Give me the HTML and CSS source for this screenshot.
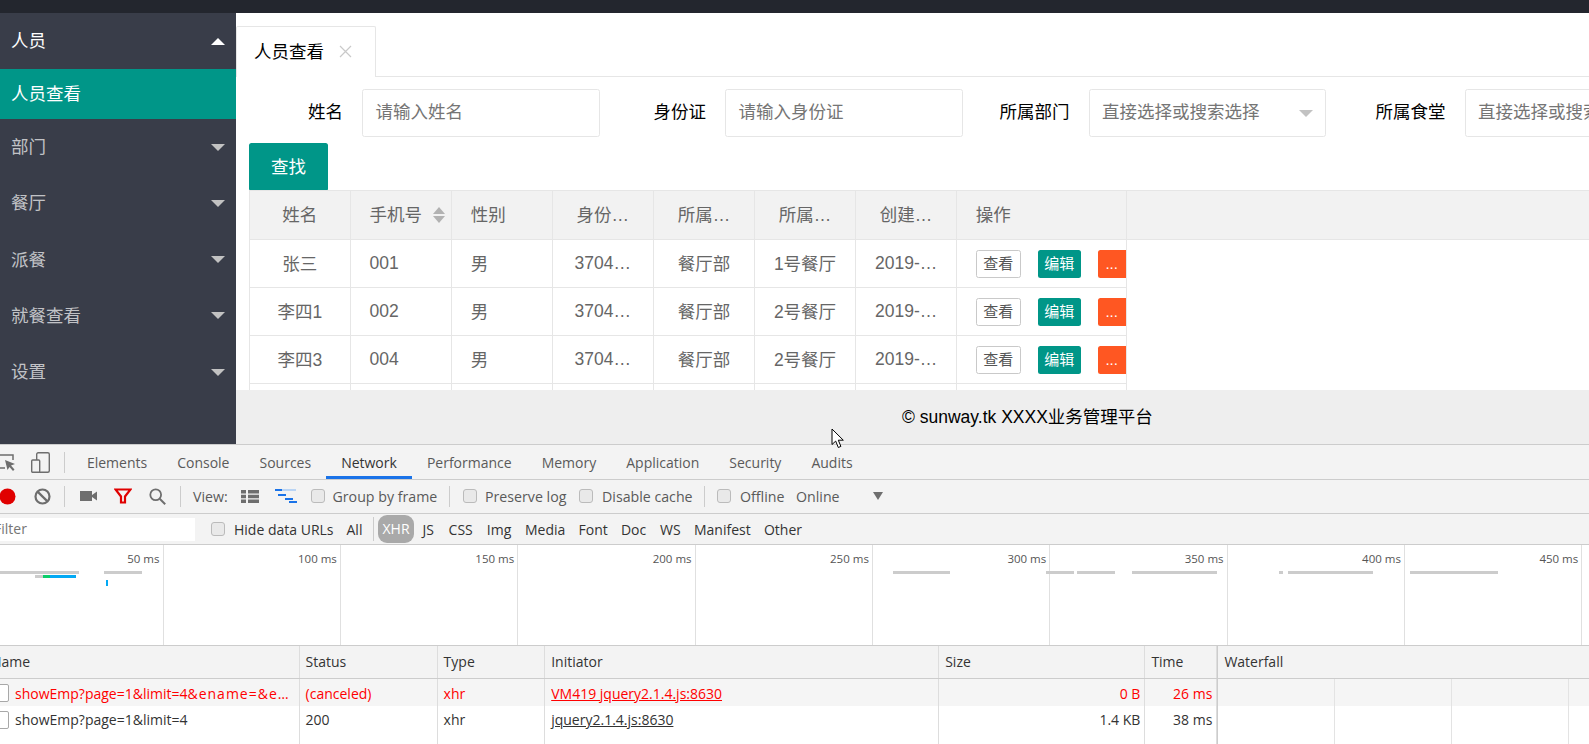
FILE: index.html
```html
<!DOCTYPE html>
<html lang="zh">
<head>
<meta charset="utf-8">
<title>XXXX业务管理平台</title>
<link rel="stylesheet" href="styles.css">
</head>
<body>
<div class="topbar"></div>
<div class="app">
  <aside class="side">
    <div class="nav-item open">人员<i class="tri up"></i></div>
    <div class="nav-sub">人员查看</div>
    <div class="nav-item">部门<i class="tri"></i></div>
    <div class="nav-item">餐厅<i class="tri"></i></div>
    <div class="nav-item">派餐<i class="tri"></i></div>
    <div class="nav-item">就餐查看<i class="tri"></i></div>
    <div class="nav-item">设置<i class="tri"></i></div>
  </aside>
  <div class="main">
    <section class="content">
      <div class="tabbar"><div class="tab">人员查看<svg class="tab-x" width="13" height="13" viewBox="0 0 13 13"><path d="M1 1l11 11M12 1L1 12" stroke="#c9c9c9" stroke-width="1.2" fill="none"/></svg></div></div>
      <form class="form">
        <div class="fitem"><label>姓名</label><div class="fin">请输入姓名</div></div>
        <div class="fitem"><label>身份证</label><div class="fin">请输入身份证</div></div>
        <div class="fitem"><label>所属部门</label><div class="fin">直接选择或搜索选择<i class="sel-tri"></i></div></div>
        <div class="fitem"><label>所属食堂</label><div class="fin">直接选择或搜索选择<i class="sel-tri"></i></div></div>
      </form>
      <button class="find" type="button">查找</button>
      <div class="thead">
        <div class="trow">
          <div class="c ctr">姓名</div>
          <div class="c">手机号<span class="sort"><i class="s-up"></i><i class="s-dn"></i></span></div>
          <div class="c">性别</div>
          <div class="c ctr">身份…</div>
          <div class="c ctr">所属…</div>
          <div class="c ctr">所属…</div>
          <div class="c ctr">创建…</div>
          <div class="c c-op">操作</div>
        </div>
      </div>
      <div class="tbody">
        <div class="trow">
          <div class="c ctr cj">张三</div><div class="c">001</div><div class="c cj">男</div><div class="c ctr">3704…</div><div class="c ctr cj">餐厅部</div><div class="c ctr cj">1号餐厅</div><div class="c ctr">2019-…</div>
          <div class="c c-op"><span class="b b-v">查看</span><span class="b b-e">编辑</span><span class="b b-d">...</span></div>
        </div>
        <div class="trow">
          <div class="c ctr cj">李四1</div><div class="c">002</div><div class="c cj">男</div><div class="c ctr">3704…</div><div class="c ctr cj">餐厅部</div><div class="c ctr cj">2号餐厅</div><div class="c ctr">2019-…</div>
          <div class="c c-op"><span class="b b-v">查看</span><span class="b b-e">编辑</span><span class="b b-d">...</span></div>
        </div>
        <div class="trow">
          <div class="c ctr cj">李四3</div><div class="c">004</div><div class="c cj">男</div><div class="c ctr">3704…</div><div class="c ctr cj">餐厅部</div><div class="c ctr cj">2号餐厅</div><div class="c ctr">2019-…</div>
          <div class="c c-op"><span class="b b-v">查看</span><span class="b b-e">编辑</span><span class="b b-d">...</span></div>
        </div>
        <div class="trow">
          <div class="c"></div><div class="c"></div><div class="c"></div><div class="c"></div><div class="c"></div><div class="c"></div><div class="c"></div><div class="c c-op"></div>
        </div>
      </div>
    </section>
    <footer class="foot">© sunway.tk XXXX业务管理平台</footer>
  </div>
</div>

<div class="dev">
  <div class="dev-tabs">
    <svg class="ic-inspect" width="16" height="18" viewBox="0 0 16 18"><path d="M0 2h13v5M0 15h5" fill="none" stroke="#6e6e6e" stroke-width="1.5"/><path d="M5 7l10 4-4 1.5 3.5 4-1.5 1.5-3.5-4-2 3z" fill="#6e6e6e"/></svg>
    <svg class="ic-device" width="19" height="21" viewBox="0 0 19 21"><rect x="5.7" y=".7" width="12.6" height="19.6" rx="1.5" fill="none" stroke="#6e6e6e" stroke-width="1.4"/><rect x=".7" y="8" width="8" height="12.3" rx="1" fill="#f3f3f3" stroke="#6e6e6e" stroke-width="1.4"/></svg>
    <i class="vsep tabsep"></i>
    <div class="dtab">Elements</div>
    <div class="dtab">Console</div>
    <div class="dtab">Sources</div>
    <div class="dtab on">Network</div>
    <div class="dtab">Performance</div>
    <div class="dtab">Memory</div>
    <div class="dtab">Application</div>
    <div class="dtab">Security</div>
    <div class="dtab">Audits</div>
  </div>
  <div class="tools">
    <svg width="17" height="17" viewBox="0 0 17 17"><circle cx="8.5" cy="8.5" r="8" fill="#e00000"/></svg>
    <svg width="17" height="17" viewBox="0 0 17 17"><circle cx="8.5" cy="8.5" r="7" fill="none" stroke="#6e6e6e" stroke-width="2.2"/><path d="M3.6 3.6l9.8 9.8" stroke="#6e6e6e" stroke-width="2.2"/></svg>
    <i class="vsep"></i>
    <svg width="17" height="12" viewBox="0 0 17 12"><path d="M0 1h12v10H0zM12 5l5-3.5v9L12 7z" fill="#6e6e6e"/></svg>
    <svg width="18" height="16" viewBox="0 0 18 16"><path d="M1.5 1.5h15L11 8.5v6H7v-6z" fill="none" stroke="#e00000" stroke-width="2.2"/></svg>
    <svg width="17" height="17" viewBox="0 0 17 17"><circle cx="6.7" cy="6.7" r="5.4" fill="none" stroke="#6e6e6e" stroke-width="1.8"/><path d="M10.7 10.7l5.5 5.5" stroke="#6e6e6e" stroke-width="2"/></svg>
    <i class="vsep"></i>
    <span>View:</span>
    <svg width="18" height="13" viewBox="0 0 18 13"><path d="M0 0h5v3.5H0zM7 0h11v3.5H7zM0 4.7h5v3.5H0zM7 4.7h11v3.5H7zM0 9.4h5V13H0zM7 9.4h11V13H7z" fill="#6e6e6e"/></svg>
    <svg width="22" height="14" viewBox="0 0 22 14"><path d="M0 0h21v2H0z" fill="#b9d4f4"/><path d="M0 0h7v2H0zM3 5h8v2H3zM10 9h8v2h-8zM14 12h8v2h-8z" fill="#1a73e8"/></svg>
    <i class="cb"></i><span>Group by frame</span>
    <i class="vsep"></i>
    <i class="cb"></i><span>Preserve log</span>
    <i class="cb"></i><span>Disable cache</span>
    <i class="vsep"></i>
    <i class="cb"></i><span>Offline</span><span>Online</span>
    <i class="dd"></i>
  </div>
  <div class="filters">
    <div class="fbox"><span class="fbox-t">Filter</span></div>
    <i class="cb"></i><span>Hide data URLs</span><span>All</span><i class="vsep short"></i>
    <span class="pill">XHR</span><span>JS</span><span>CSS</span><span>Img</span><span>Media</span><span>Font</span><span>Doc</span><span>WS</span><span>Manifest</span><span>Other</span>
  </div>
  <div class="overview">
    <div class="tick t0">50 ms</div>
    <div class="tick">100 ms</div>
    <div class="tick">150 ms</div>
    <div class="tick">200 ms</div>
    <div class="tick">250 ms</div>
    <div class="tick">300 ms</div>
    <div class="tick">350 ms</div>
    <div class="tick">400 ms</div>
    <div class="tick">450 ms</div>
    <i class="bar g" style="left:0;width:79px"></i>
    <i class="bar g" style="left:104px;width:38px"></i>
    <i class="bar g" style="left:893px;width:57px"></i>
    <i class="bar g" style="left:1046px;width:28px"></i>
    <i class="bar g" style="left:1077px;width:38px"></i>
    <i class="bar g" style="left:1132px;width:85px"></i>
    <i class="bar g" style="left:1279px;width:4px"></i>
    <i class="bar g" style="left:1288px;width:85px"></i>
    <i class="bar g" style="left:1410px;width:88px"></i>
    <i class="bar r2 g2" style="left:35px;width:8px"></i>
    <i class="bar r2 gr" style="left:43px;width:7px"></i>
    <i class="bar r2 bl" style="left:50px;width:26px"></i>
    <i class="bar r3 bl" style="left:106px;width:1.5px"></i>
  </div>
  <div class="nhead ngrid">
    <div class="nc"><span class="n-clip">Name</span></div><div class="nc">Status</div><div class="nc">Type</div><div class="nc">Initiator</div><div class="nc">Size</div><div class="nc">Time</div><div class="nc nc-wf wf-top">Waterfall</div>
  </div>
  <div class="nrow ngrid err">
    <div class="nc"><i class="doc"></i>showEmp?page=1&amp;limit=4<span class="wide">&amp;ename=&amp;e…</span></div><div class="nc">(canceled)</div><div class="nc">xhr</div><div class="nc"><u>VM419 jquery2.1.4.js:8630</u></div><div class="nc rt">0 B</div><div class="nc rt">26 ms</div><div class="nc nc-wf"></div>
  </div>
  <div class="nrow ngrid">
    <div class="nc"><i class="doc"></i>showEmp?page=1&amp;limit=4</div><div class="nc">200</div><div class="nc">xhr</div><div class="nc"><u>jquery2.1.4.js:8630</u></div><div class="nc rt">1.4 KB</div><div class="nc rt">38 ms</div><div class="nc nc-wf"></div>
  </div>
  <div class="nrow ngrid">
    <div class="nc"></div><div class="nc"></div><div class="nc"></div><div class="nc"></div><div class="nc"></div><div class="nc"></div><div class="nc nc-wf"></div>
  </div>
</div>

<svg class="cursor" width="14" height="21" viewBox="0 0 14 21"><path d="M1 1v15.5l3.7-3.4 2.6 6.4 2.6-1.1-2.6-6.2h5z" fill="#fff" stroke="#000" stroke-width="1"/></svg>
</body>
</html>
```
FILE: styles.css
```css
* { box-sizing: border-box; }
html, body { margin: 0; padding: 0; }
body {
  width: 1589px;
  height: 744px;
  overflow: hidden;
  position: relative;
  background: #fff;
  font: 17.5px "Liberation Sans", "Noto Sans CJK SC", sans-serif;
  color: #333;
}
i { display: block; font-style: normal; }

.topbar { height: 13px; background: #23262e; }
.app { display: flex; height: 431px; }

.side { width: 236px; flex: none; background: #393d49; color: rgba(255,255,255,.7); }
.nav-item {
  height: 56.25px;
  padding: 0 11.5px 3px 11px;
  display: flex;
  align-items: center;
  justify-content: space-between;
}
.nav-item.open { height: 56px; color: #fff; }
.nav-sub {
  height: 50px;
  padding: 0 0 3px 11px;
  display: flex;
  align-items: center;
  background: #009688;
  color: #fff;
}
.tri { width: 0; height: 0; margin-top: 3px; border: 7.8px solid transparent; border-top-color: #c2c2c2; border-bottom-width: 0; }
.tri.up { border-top-width: 0; border-bottom-width: 7.8px; border-top-color: transparent; border-bottom-color: #fff; }

.main { flex: 1; min-width: 0; display: flex; flex-direction: column; }
.content { height: 377px; overflow: hidden; background: #fff; }
.foot {
  height: 54px;
  background: #eee;
  color: #000;
  display: flex;
  align-items: center;
  padding: 0 0 3px 666px;
}

.tabbar { padding-top: 13px; height: 63.5px; border-bottom: 1px solid #e6e6e6; }
.tab {
  width: 140px;
  height: 50.5px;
  padding: 0 0 3px 17px;
  display: flex;
  align-items: center;
  background: #fff;
  color: #000;
  border: 1px solid #e6e6e6;
  border-bottom: 0;
  border-radius: 2px 2px 0 0;
}
.tab-x { margin: 3px 0 0 15px; flex: none; }

.form { display: flex; margin-top: 12.8px; }
.fitem { flex: none; width: 363px; display: flex; }
.fitem:first-child { margin-left: .5px; }
.fitem:nth-child(2) { width: 364px; }
.fitem:nth-child(3) { width: 376px; }
.fitem label { width: 125.5px; flex: none; text-align: right; padding-right: 19px; line-height: 47.5px; color: #000; }
.fitem:nth-child(n+3) label { width: 125px; }
.fin {
  width: 237.5px;
  flex: none;
  height: 47.5px;
  padding-left: 12.5px;
  border: 1px solid #e6e6e6;
  border-radius: 2.5px;
  color: #757575;
  line-height: 45px;
  position: relative;
  white-space: nowrap;
  overflow: hidden;
}
.sel-tri {
  position: absolute;
  right: 12px;
  top: 20px;
  width: 0;
  height: 0;
  border: 7.5px solid transparent;
  border-top-color: #c2c2c2;
  border-bottom-width: 0;
}

.find {
  display: block;
  margin: 6px 0 0 13px;
  width: 79px;
  height: 48px;
  border: 0;
  border-radius: 2.5px;
  background: #009688;
  color: #fff;
  font: inherit;
  padding: 0 0 3px;
}

.thead { background: #f2f2f2; border-top: 1px solid #e6e6e6; border-bottom: 1px solid #e6e6e6; margin-left: 13px; height: 49.5px; margin-top: -.7px; }
.tbody { margin-left: 13px; margin-top: .5px; width: 878px; color: #666; }
.trow { display: flex; height: 48px; color: #666; }
.thead .trow { height: 47.5px; }
.thead .c { padding-bottom: 3px; }
.tbody .trow { border-bottom: 1px solid #e6e6e6; }
.c {
  flex: none;
  width: 101.1px;
  border-right: 1px solid #e6e6e6;
  display: flex;
  align-items: center;
  padding-left: 19px;
  white-space: nowrap;
}
.c:first-child { border-left: 1px solid #e6e6e6; width: 101.6px; }
.c.ctr { justify-content: center; padding-left: 0; }
.c.cj { padding-bottom: 3px; }
.c-op { width: 170px; padding-left: 18.5px; overflow: hidden; }

.sort { margin-left: 11px; width: 13px; display: flex; flex-direction: column; gap: 2.5px; margin-top: 3px; }
.s-up { width: 0; height: 0; border: 6.5px solid transparent; border-top: 0; border-bottom: 7px solid #b2b2b2; }
.s-dn { width: 0; height: 0; border: 6.5px solid transparent; border-bottom: 0; border-top: 7px solid #b2b2b2; }

.b {
  flex: none;
  height: 28px;
  border-radius: 2.5px;
  font-size: 15px;
  line-height: 27px;
  text-align: center;
}
.b-v { width: 45px; border: 1px solid #c9c9c9; color: #555; background: #fff; line-height: 26px; }
.b-e { width: 43px; margin-left: 17px; background: #009688; color: #fff; }
.b-d { width: 43px; margin-left: 17px; background: #ff5722; color: #fff; padding-right: 15px; }

.dev {
  height: 300px;
  background: #f3f3f3;
  border-top: 1px solid #ccc;
  position: relative;
  overflow: hidden;
  font: 14.2px "Open Sans", "Noto Sans", sans-serif;
  color: #333;
}
.vsep { width: 1px; height: 21px; background: #ccc; }
.vsep.short { height: 24px; }

.dev-tabs {
  height: 35px;
  border-bottom: 1px solid #ccc;
  display: flex;
  align-items: center;
  color: #5a5a5a;
  font-size: 14px;
}
.ic-inspect { flex: none; }
.ic-device { margin-left: 15.4px; flex: none; }
.tabsep { margin: 0 7px 0 13.5px; flex: none; }
.dtab { height: 100%; line-height: 35px; padding: 0 15px; white-space: nowrap; }
.dtab.on { color: #333; box-shadow: inset 0 -3px 0 #1a73e8; }

.tools, .filters { display: grid; align-items: center; white-space: nowrap; color: #5a5a5a; border-bottom: 1px solid #ccc; }
.tools {
  height: 33.5px;
  margin-left: -1px;
  grid-template-columns: 35px 30px 16px 34px 35px 31px 13px 48px 33.5px 36px 22px 116px 14.5px 22px 94px 23px 102px 13px 23px 56px 76.5px 1fr;
}
.filters {
  height: 31.5px;
  padding-top: 1px;
  color: #333;
  font-size: 14px;
  grid-template-columns: 211px 23px 112.5px 26px 5.5px 44.6px 26px 38.2px 38.2px 53.6px 42.4px 39px 34px 70px 1fr;
}
.cb { width: 14px; height: 14px; border: 1px solid #bbb; border-radius: 3px; background: #e9e9e9; }
.dd { width: 0; height: 0; border: 5px solid transparent; border-top: 8px solid #6e6e6e; border-bottom: 0; }

.fbox { width: 195px; height: 23px; background: #fff; overflow: hidden; color: #757575; line-height: 22px; }
.fbox-t { display: block; margin-left: -6px; }
.pill {
  width: 36px;
  height: 28px;
  background: #a9a9a9;
  color: #fff;
  border-radius: 9px;
  text-align: center;
  line-height: 27px;
  font-size: 14px;
}

.overview {
  height: 101px;
  background: #fff;
  display: flex;
  position: relative;
  border-bottom: 1px solid #ccc;
}
.tick {
  flex: none;
  width: 177.35px;
  height: 100%;
  border-right: 1.5px solid #e0e0e0;
  text-align: right;
  padding: 6px 3px 0 0;
  font-size: 11.5px;
  color: #555;
  white-space: nowrap;
}
.tick.t0 { width: 163.5px; }
.bar { position: absolute; top: 25.5px; height: 3px; }
.bar.g { background: #ccc; }
.bar.r2 { top: 29.5px; }
.bar.r3 { top: 35px; height: 6px; }
.g2 { background: #ccc; }
.gr { background: #0cce6b; }
.bl { background: #03a9f4; }

.ngrid {
  display: grid;
  grid-template-columns: 299.6px 138px 107.6px 394px 206.2px 72px 1fr;
  white-space: nowrap;
  font-size: 14px;
}
.nhead { height: 32.5px; border-bottom: 1px solid #ccc; color: #333; }
.nrow { height: 26px; background: #fff; color: #333; }
.nrow.err { height: 27px; background: #f5f5f5; color: #f00; }
.nc {
  border-right: 1px solid #ddd;
  padding-left: 6px;
  display: flex;
  align-items: center;
  overflow: hidden;
}
.nrow .nc { padding-top: 2px; }
.n-clip { margin-left: -15px; }
.wide { letter-spacing: 1px; }
.nc.rt { justify-content: flex-end; padding-right: 4px; padding-left: 0; }
.nc-wf {
  border-left: 1px solid #ccc;
  border-right: 0;
  background: repeating-linear-gradient(90deg, transparent 0 116px, #e3e3e3 116px 117px);
}
.nc-wf.wf-top { background: none; }
.doc { width: 16px; height: 18px; margin: 0 6px 0 -13px; flex: none; border: 1px solid #a8a8a8; border-radius: 2px; background: #fff; }

.cursor { position: absolute; left: 831px; top: 428px; }
```
